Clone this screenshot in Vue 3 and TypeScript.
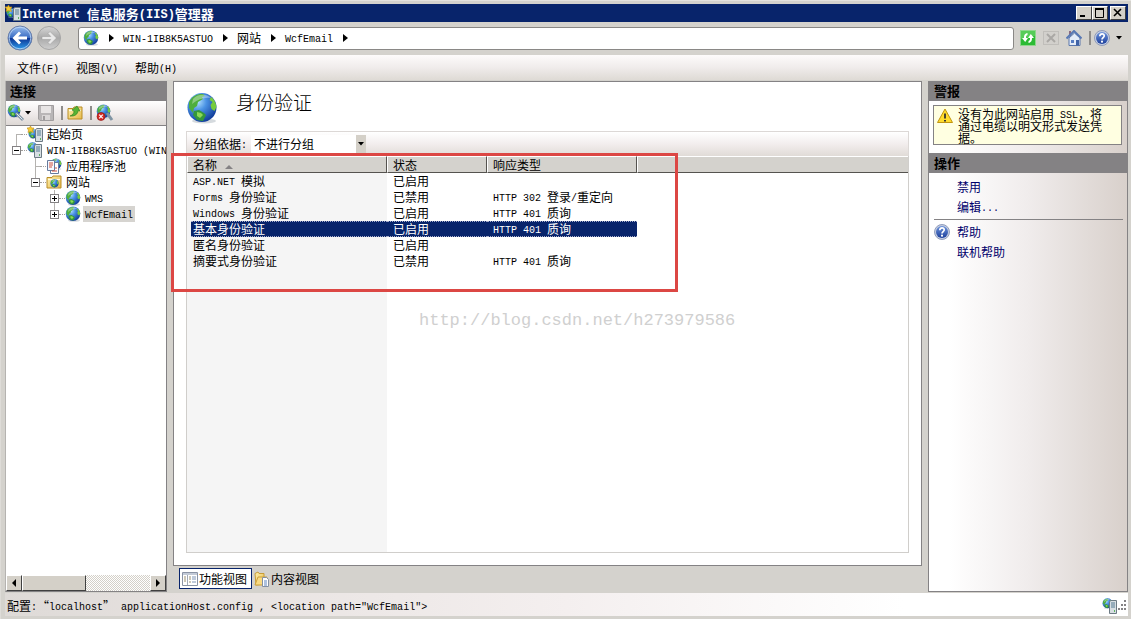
<script setup lang="ts">
import { ref, h, type FunctionalComponent } from 'vue'

interface AuthRow {
  name: string
  status: string
  response: string
}

// Splits a label into half-width and full-width runs so each gets its own face.
const Mx: FunctionalComponent<{ t: string }> = (props) =>
  (props.t.match(/[\x20-\x7e]+|[^\x20-\x7e]+/g) ?? []).map((run) =>
    /^[\x20-\x7e]/.test(run) ? h('span', { class: 'latin' }, run) : run,
  )
Mx.props = ['t']

const crumbs = ['WIN-1IB8K5ASTUO', '网站', 'WcfEmail']
const menus = ['文件(F)', '视图(V)', '帮助(H)']
const rows: AuthRow[] = [
  { name: 'ASP.NET 模拟', status: '已启用', response: '' },
  { name: 'Forms 身份验证', status: '已禁用', response: 'HTTP 302 登录/重定向' },
  { name: 'Windows 身份验证', status: '已启用', response: 'HTTP 401 质询' },
  { name: '基本身份验证', status: '已启用', response: 'HTTP 401 质询' },
  { name: '匿名身份验证', status: '已启用', response: '' },
  { name: '摘要式身份验证', status: '已禁用', response: 'HTTP 401 质询' },
]
const selected = ref(3)
const grouping = ref('不进行分组')
</script>

<template>
  <svg class="defs" aria-hidden="true">
    <defs>
      <radialGradient id="gSea" cx="35%" cy="30%" r="75%">
        <stop offset="0" stop-color="#b4e2ff" />
        <stop offset=".4" stop-color="#4a92e4" />
        <stop offset="1" stop-color="#0f3a98" />
      </radialGradient>
      <linearGradient id="gBack" x1="0" y1="0" x2="0" y2="1">
        <stop offset="0" stop-color="#9cc0ee" />
        <stop offset=".48" stop-color="#3a6cc4" />
        <stop offset=".52" stop-color="#0c3696" />
        <stop offset="1" stop-color="#2fa0ee" />
      </linearGradient>
      <linearGradient id="gFwd" x1="0" y1="0" x2="0" y2="1">
        <stop offset="0" stop-color="#d6d6d6" />
        <stop offset=".5" stop-color="#a9a9a9" />
        <stop offset="1" stop-color="#cfcfcf" />
      </linearGradient>
      <linearGradient id="gFolder" x1="0" y1="0" x2="1" y2="1">
        <stop offset="0" stop-color="#fff2b0" />
        <stop offset="1" stop-color="#e6b94a" />
      </linearGradient>
      <linearGradient id="gHelp" x1="0" y1="0" x2="0" y2="1">
        <stop offset="0" stop-color="#6f95dc" />
        <stop offset="1" stop-color="#1c3f9c" />
      </linearGradient>
    </defs>
    <symbol id="globe" viewBox="0 0 32 32">
      <ellipse cx="18" cy="29" rx="12" ry="2.5" fill="#b9c2c8" opacity=".6" />
      <circle cx="16" cy="15.5" r="14.5" fill="url(#gSea)" />
      <path d="M3 10C6 4 12 1.500 17 2l2 2-3 1 1 2-5 3-1 4-3 2-1 5-4-5z" fill="#4fae3c" />
      <path d="M25 5c3 2 5 6 5.500 10l-2 4-3-2-1-4 2-3-3-2z" fill="#76cc3e" />
      <path d="M8 19l5-1 5 3 2 2-3 6-6-1-4-5z" fill="#35983a" />
      <path d="M11 20l4 1 2 2-3 3-3-2z" fill="#8bd957" />
      <path d="M7 7c4-5 13-6 18-1-6-1-13 1-19 6z" fill="#fff" opacity=".35" />
    </symbol>
    <symbol id="tower" viewBox="0 0 8 14">
      <path d="M.5 1.500L2 .5h5.500v13h-7z" fill="#d7dee2" stroke="#6c7a84" />
      <path d="M2 3h4M2 5h4M2 7h4" stroke="#557a93" />
      <path d="M5 11h1" stroke="#35a535" stroke-width="1.500" />
    </symbol>
    <symbol id="server" viewBox="0 0 16 16">
      <use href="#globe" x="0" y="0" width="11" height="11" />
      <use href="#tower" x="7" y="2" width="8" height="14" />
    </symbol>
    <symbol id="start" viewBox="0 0 16 16">
      <use href="#globe" x="1" y="3" width="10" height="10" />
      <use href="#tower" x="8" y="2" width="8" height="14" />
      <path d="M3.500 0l1 2 2.500 0-1.500 2 1 2.500-3-1-2.500 1 .5-2.500L0 2l2.500-.2z" fill="#f6cb35" stroke="#c18a10" stroke-width=".6" />
    </symbol>
    <symbol id="help" viewBox="0 0 16 16">
      <circle cx="8" cy="8" r="7.500" fill="#c6cfe2" stroke="#7d8cb0" stroke-width=".8" />
      <circle cx="8" cy="8" r="6" fill="url(#gHelp)" />
      <path d="M5.800 6.200C5.800 3 10.400 3.200 10.200 6 10.100 7.600 8 7.700 8 9.500" fill="none" stroke="#fff" stroke-width="1.700" />
      <circle cx="8" cy="11.700" r="1.100" fill="#fff" />
    </symbol>
    <symbol id="folder" viewBox="0 0 16 16">
      <path d="M1 3.500h5l1-1.500h8v12H1z" fill="url(#gFolder)" stroke="#b98c24" />
      <path d="M2 5.500h12" stroke="#fffbe0" />
    </symbol>
  </svg>

  <div class="window">
    <header class="title">
      <svg class="i16"><use href="#start" /></svg>
      <h1><Mx t="Internet 信息服务(IIS)管理器" /></h1>
      <div class="winbtns">
        <button type="button" aria-label="最小化"><svg viewBox="0 0 12 10"><path d="M2 8h5" stroke="#000" stroke-width="2" /></svg></button>
        <button type="button" aria-label="最大化"><svg viewBox="0 0 12 10"><path d="M1.500 1v8.500h8V1M1 1.500h9" fill="none" stroke="#000" /><path d="M1 1h9" stroke="#000" stroke-width="2" /></svg></button>
        <button type="button" class="close" aria-label="关闭"><svg viewBox="0 0 12 10"><path d="M2 1l7 7M9 1l-7 7" stroke="#000" stroke-width="1.600" /></svg></button>
      </div>
    </header>

    <div class="nav">
      <div class="history">
        <button type="button" aria-label="后退">
          <svg class="i26" viewBox="0 0 26 26">
            <circle cx="13" cy="13" r="12" fill="url(#gBack)" stroke="#6b7fa8" />
            <circle cx="13" cy="13" r="10.800" fill="none" stroke="#c4dcf8" stroke-width=".8" />
            <path d="M5.500 13l6.500-6.500 2 2-2.800 3H20v3h-8.800l2.800 3-2 2z" fill="#fff" />
          </svg>
        </button>
        <button type="button" aria-label="前进">
          <svg class="i26" viewBox="0 0 26 26">
            <circle cx="13" cy="13" r="11.500" fill="url(#gFwd)" stroke="#a6a6a6" />
            <path d="M20.500 13L14 6.500l-2 2 2.800 3H6v3h8.800l-2.800 3 2 2z" fill="#e9e9e9" stroke="#999" stroke-width=".5" />
          </svg>
        </button>
      </div>
      <nav class="address" aria-label="路径">
        <svg class="i16"><use href="#globe" /></svg>
        <svg class="arrow" viewBox="0 0 24 12"><path d="M10 2l5 4-5 4z" /></svg>
        <template v-for="c in crumbs" :key="c">
          <button type="button"><Mx :t="c" /></button>
          <svg class="arrow" viewBox="0 0 24 12"><path d="M10 2l5 4-5 4z" /></svg>
        </template>
      </nav>
      <div class="tools">
        <button type="button" aria-label="刷新">
          <svg class="i16" viewBox="0 0 16 16">
            <rect x=".5" y=".5" width="15" height="15" fill="#2dbb35" stroke="#8fd68d" />
            <path d="M1 1h14v5L1 9z" fill="#78db74" opacity=".55" />
            <path d="M7.500 3C4.500 3.500 4 5.500 4 8H2l3.200 4L8 8H6c0-2 0-2.500 1.500-3zM8.500 13c3-.5 3.500-2.500 3.500-5h2l-3.200-4L8 8h2c0 2 0 2.500-1.500 3z" fill="#fff" />
          </svg>
        </button>
        <button type="button" aria-label="停止" disabled>
          <svg class="i16" viewBox="0 0 16 16"><rect x=".5" y="1.500" width="15" height="13" fill="#d2d0cc" stroke="#c0beba" /><path d="M4 4l8 8M12 4l-8 8" stroke="#aaa8a5" stroke-width="2" /></svg>
        </button>
        <button type="button" aria-label="主页">
          <svg class="i16" viewBox="0 0 16 16">
            <path d="M3 1h2v5H3z" fill="#8a6a80" />
            <path d="M3 8v7.500h11V8L8.500 3z" fill="#e4ecf8" stroke="#5b77ab" />
            <path d="M.5 8.500L8 1l7.500 7.500" fill="none" stroke="#5878b4" stroke-width="2" />
            <path d="M10 10h3v5.500h-3z" fill="#3f62a6" /><path d="M5 10h3v3H5z" fill="#577dc2" />
          </svg>
        </button>
        <i class="sep"></i>
        <button type="button" class="helpbtn" aria-label="帮助">
          <svg class="i16"><use href="#help" /></svg>
          <svg class="down" viewBox="0 0 6 4"><path d="M0 0h6L3 3.500z" /></svg>
        </button>
      </div>
    </div>

    <div class="menu" role="menubar">
      <button v-for="m in menus" :key="m" type="button" role="menuitem"><Mx :t="m" /></button>
    </div>

    <div class="body">
      <aside class="panel left">
        <h2>连接</h2>
        <div class="ltools">
          <button type="button" class="conn" aria-label="连接">
            <svg class="i18" viewBox="0 0 18 18"><use href="#globe" width="14" height="14" /><path d="M9 9l7 7" stroke="#8296a6" stroke-width="3" /><path d="M9.500 9.500l6 6" stroke="#e2ecf2" /></svg>
            <svg class="down" viewBox="0 0 6 4"><path d="M0 0h6L3 3.500z" /></svg>
          </button>
          <button type="button" aria-label="保存" disabled>
            <svg class="i16" viewBox="0 0 16 16"><path d="M.5.5h15v15H2l-1.500-1.500z" fill="#b9b6b7" stroke="#a09d9e" /><path d="M3 1h10v7H3z" fill="#e8e5e5" /><path d="M4 10h8v5H4z" fill="#dad7d7" /><path d="M5 11h2v4H5z" fill="#a09d9e" /></svg>
          </button>
          <i class="sep"></i>
          <button type="button" aria-label="向上">
            <svg class="i16" viewBox="0 0 16 16"><use href="#folder" width="16" height="16" /><path d="M3 11c3-1 4-3 4-5L5 5l5-4 3 5-2-.3c0 3-3 6-8 5.300z" fill="#57b334" stroke="#287a17" stroke-width=".6" /></svg>
          </button>
          <i class="sep"></i>
          <button type="button" aria-label="删除连接">
            <svg class="i18" viewBox="0 0 18 18"><use href="#globe" width="15" height="15" /><path d="M11 9l5 7" stroke="#8094a4" stroke-width="3" /><circle cx="5" cy="12.500" r="4" fill="#d52a25" stroke="#8c1010" stroke-width=".6" /><path d="M3.200 10.700l3.600 3.600M6.800 10.700l-3.600 3.600" stroke="#fff" stroke-width="1.200" /></svg>
          </button>
        </div>

        <ul class="tree" role="tree">
          <li role="treeitem" class="l1 nobox first">
            <i class="box"></i><svg class="i16"><use href="#start" /></svg><span>起始页</span>
          </li>
          <li role="treeitem" class="l1 last">
            <button type="button" class="box" aria-label="折叠"></button><svg class="i16"><use href="#server" /></svg><span><Mx t="WIN-1IB8K5ASTUO (WIN" /></span>
          </li>
          <li role="treeitem" class="l2 nobox">
            <i class="box"></i>
            <svg class="i16" viewBox="0 0 16 16"><use href="#globe" x="4" width="12" height="12" /><path d="M4.500 4.500h8v11h-8z" fill="#fff" stroke="#677b9d" /><path d="M1.500 2.500h7v10h-7z" fill="#f4f8ff" stroke="#677b9d" /><path d="M3 5h4M3 7h4M3 9h3M6 13h5M9 10h2" stroke="#d2503c" /></svg>
            <span>应用程序池</span>
          </li>
          <li role="treeitem" class="l2 last">
            <button type="button" class="box" aria-label="折叠"></button>
            <svg class="i16" viewBox="0 0 16 16"><use href="#folder" width="16" height="16" /><use href="#globe" x="4" y="5" width="9" height="9" /></svg>
            <span>网站</span>
          </li>
          <li role="treeitem" class="l3">
            <button type="button" class="box plus" aria-label="展开"></button><svg class="i16"><use href="#globe" /></svg><span><Mx t="WMS" /></span>
          </li>
          <li role="treeitem" class="l3 last current" aria-selected="true">
            <button type="button" class="box plus" aria-label="展开"></button><svg class="i16"><use href="#globe" /></svg><span><Mx t="WcfEmail" /></span>
          </li>
        </ul>

        <div class="hscroll">
          <button type="button" aria-label="向左滚动"><svg viewBox="0 0 8 8"><path d="M6 0v8L2 4z" /></svg></button>
          <div class="track"><div class="thumb"></div></div>
          <button type="button" aria-label="向右滚动"><svg viewBox="0 0 8 8"><path d="M2 0v8l4-4z" /></svg></button>
        </div>
      </aside>

      <main class="center">
        <section class="page">
          <div class="heading">
            <svg class="i32"><use href="#globe" /></svg>
            <h3>身份验证</h3>
          </div>
          <div class="groupbar">
            <label for="grouping"><Mx t="分组依据:" /></label>
            <div class="combo">
              <select id="grouping" v-model="grouping">
                <option>不进行分组</option>
                <option>状态</option>
                <option>响应类型</option>
              </select>
              <span class="drop"><svg class="down" viewBox="0 0 6 4"><path d="M0 0h6L3 3.500z" /></svg></span>
            </div>
          </div>
          <div class="list">
            <table>
              <colgroup><col class="c1" /><col class="c2" /><col class="c3" /><col /></colgroup>
              <thead>
                <tr>
                  <th>名称<svg class="sort" viewBox="0 0 8 4"><path d="M0 4l4-4 4 4z" fill="#848284" /></svg></th>
                  <th>状态</th>
                  <th>响应类型</th>
                  <th></th>
                </tr>
              </thead>
              <tbody>
                <tr v-for="(r, i) in rows" :key="r.name" :class="{ sel: i === selected }" @click="selected = i">
                  <td><div><Mx :t="r.name" /></div></td>
                  <td><div><Mx :t="r.status" /></div></td>
                  <td><div><Mx :t="r.response" /></div></td>
                  <td></td>
                </tr>
              </tbody>
            </table>
          </div>
          <div class="marker"></div>
          <div class="watermark">http://blog.csdn.net/h273979586</div>
        </section>
        <div class="tabs">
          <button type="button" class="on">
            <svg class="i16" viewBox="0 0 16 16"><path d="M.5 1.500h15v13H.5z" fill="#fff" stroke="#8a93a4" /><path d="M1 3h14" stroke="#c3cad6" stroke-width="2" /><path d="M5.500 4v10" stroke="#a3aab6" /><path d="M2 6h2M2 8h2M2 10h2M7 11h2M7 8h2M7 6h2" stroke="#9a8f6f" /><path d="M10 6h4M10 8h4M10 11h4" stroke="#7e94b4" /></svg>
            功能视图
          </button>
          <button type="button">
            <svg class="i16" viewBox="0 0 16 16"><path d="M1 2.500L4 1l1 1.500h5V13L2 14z" fill="url(#gFolder)" stroke="#c89c36" /><path d="M1 14l3-8h9l-2 8z" fill="#f8da83" stroke="#cda03b" /><path d="M8.500 6.500h4l2 2v7h-6z" fill="#fff" stroke="#8390a4" /><path d="M10 10h3M10 12h3M10 14h3" stroke="#5d83bd" /></svg>
            内容视图
          </button>
        </div>
      </main>

      <aside class="panel right">
        <h2>警报</h2>
        <div class="alert">
          <svg class="i16" viewBox="0 0 16 16"><path d="M8 1l7.500 13.500H.5z" fill="#ffdc2e" stroke="#c09410" stroke-linejoin="round" /><path d="M8 5.500v5" stroke="#333" stroke-width="1.800" /><path d="M7 12h2v1.500H7z" fill="#333" /></svg>
          <p><Mx t="没有为此网站启用 SSL，将通过电缆以明文形式发送凭据。" /></p>
        </div>
        <h2>操作</h2>
        <div class="actions">
          <a href="#disable">禁用</a>
          <a href="#edit"><span><Mx t="编辑..." /></span></a>
          <hr />
          <a href="#help"><svg class="i16"><use href="#help" /></svg>帮助</a>
          <a href="#online">联机帮助</a>
        </div>
      </aside>
    </div>

    <footer class="status">
      <span class="config"><Mx t='配置:“localhost” applicationHost.config , <location path="WcfEmail">' /></span>
      <svg class="i16"><use href="#server" /></svg>
      <svg class="grip" viewBox="0 0 8 11"><path d="M6 0h2v2H6zM6 4h2v2H6zM6 8h2v2H6zM3 4h2v2H3zM3 8h2v2H3zM0 8h2v2H0z" fill="#848284" /></svg>
    </footer>
  </div>
</template>

<style>
body {
  margin: 0;
  background: #d4d0c8;
}
.latin {
  font-family: "Liberation Mono", monospace;
  font-size: 10px;
  line-height: 0;
  vertical-align: 1px;
}
.title .latin {
  font-size: 12px;
}
</style>

<style scoped>
.defs {
  position: absolute;
  width: 0;
  height: 0;
}
.window,
.window * {
  box-sizing: border-box;
}
.window {
  height: 100vh;
  display: flex;
  flex-direction: column;
  padding: 3px 3px 3px 4px;
  background: #d4d2cd;
  border-top: 1px solid #e4e2de;
  border-left: 1px solid #dedcd8;
  font: 12px/16px "Noto Sans CJK SC", sans-serif;
  color: #000;
  overflow: hidden;
}
.window button {
  font: inherit;
  color: inherit;
  background: none;
  border: 0;
  padding: 0;
  margin: 0;
  white-space: nowrap;
}
svg {
  flex: none;
  display: block;
}
.i16 {
  width: 16px;
  height: 16px;
}
.i18 {
  width: 18px;
  height: 18px;
}
.i26 {
  width: 26px;
  height: 26px;
}
.i32 {
  width: 32px;
  height: 32px;
}
.down {
  width: 6px;
  height: 4px;
}
.sep {
  width: 2px;
  height: 14px;
  background: #8f8d8a;
}

/* title bar */
.title {
  flex: none;
  display: flex;
  align-items: center;
  height: 18px;
  background: #08246b;
  color: #fff;
}
.title h1 {
  flex: 1;
  margin: 0 0 0 1px;
  font-size: 13px;
  line-height: 17px;
}
.winbtns {
  display: flex;
  padding-right: 2px;
}
.window .winbtns button {
  width: 16px;
  height: 14px;
  padding: 0 1px;
  background: #d4d0c8;
  border: 1px solid;
  border-color: #fff #404040 #404040 #fff;
}
.window .winbtns .close {
  margin-left: 2px;
}
.winbtns svg {
  width: 12px;
  height: 10px;
}

/* navigation */
.nav {
  flex: none;
  display: flex;
  align-items: center;
  height: 32px;
  padding-left: 2px;
}
.history {
  display: flex;
  gap: 3px;
  width: 71px;
}
.address {
  flex: 1;
  display: flex;
  align-items: center;
  height: 23px;
  padding-left: 4px;
  background: #fff;
  border: 1px solid #8a8886;
  border-radius: 3px;
}
.arrow {
  width: 24px;
  height: 12px;
}
.tools {
  display: flex;
  align-items: center;
  gap: 7px;
  padding: 0 6px;
}
.helpbtn {
  display: flex;
  align-items: center;
  gap: 6px;
}
.tools .sep {
  margin-right: -4px;
}

/* menu */
.menu {
  flex: none;
  display: flex;
  gap: 17px;
  height: 25px;
  margin-top: 1px;
  padding: 0 12px;
  background: linear-gradient(#fdfbfb, #f0eceb 50%, #dedad5);
}

/* three columns */
.body {
  flex: 1;
  min-height: 0;
  display: grid;
  grid-template-columns: 162px minmax(0, 1fr) 200px;
  column-gap: 6px;
  padding-top: 1px;
}
.panel {
  display: flex;
  flex-direction: column;
  min-width: 0;
  min-height: 0;
  border: 1px solid #848284;
  border-top: 0;
  background: #fff;
}
.panel h2 {
  flex: none;
  margin: 0;
  height: 20px;
  padding-left: 5px;
  background: #848284;
  font-size: 13px;
  line-height: 20px;
}
.left {
  border-left-color: #b5b3b0;
}
.left h2 {
  padding-left: 4px;
}
.ltools {
  flex: none;
  display: flex;
  align-items: center;
  gap: 7px;
  height: 25px;
  padding-left: 1px;
  background: linear-gradient(#fff, #f1ecec 50%, #ddd8d5);
  border-bottom: 1px solid #848284;
}
.ltools .sep {
  margin-right: -3px;
}
.conn {
  display: flex;
  align-items: center;
}

/* connection tree */
.tree {
  flex: 1;
  min-height: 0;
  margin: 0;
  padding: 0;
  list-style: none;
  overflow: hidden;
}
.tree li {
  display: flex;
  align-items: center;
  height: 16px;
  white-space: nowrap;
  background-image: linear-gradient(#b5b3b0, #b5b3b0);
  background-repeat: no-repeat;
  background-size: 1px 16px;
}
.tree .last {
  background-size: 1px 8px;
}
.tree .l1 {
  padding-left: 6px;
  background-position: 10px 0;
}
.tree .first {
  background-position: 10px 8px;
}
.tree .l2 {
  padding-left: 25px;
  background-position: 29px 0;
}
.tree .l3 {
  padding-left: 44px;
  background-position: 48px 0;
}
.tree .i16 {
  order: 1;
  margin-left: 6px;
}
.tree li::after {
  content: "";
  flex: none;
  width: 6px;
  margin-right: -6px;
  border-top: 1px dotted #a09e9c;
}
.tree span {
  order: 2;
  margin-left: 2px;
  padding: 0 2px;
}
.current span {
  background: #d6d4d0;
}
.tree .current :deep(.latin) {
  padding: 0;
  margin: 0;
}
.tree .box {
  flex: none;
  width: 9px;
  height: 9px;
  border: 1px solid #848284;
  background: linear-gradient(#000, #000) center / 5px 1px no-repeat #fff;
}
.tree .plus {
  background: linear-gradient(#000, #000) center / 5px 1px no-repeat,
    linear-gradient(#000, #000) center / 1px 5px no-repeat #fff;
}
.tree .nobox .box {
  height: 16px;
  border: 0;
  background: linear-gradient(#b5b3b0, #b5b3b0) 4px 8px / 5px 1px no-repeat;
}
.hscroll {
  flex: none;
  display: flex;
  height: 16px;
}
.window .hscroll button {
  width: 16px;
  padding: 0 3px;
}
.window .hscroll button,
.thumb {
  height: 16px;
  background: #d4d0c8;
  border: 1px solid;
  border-color: #fff #404040 #404040 #fff;
}
.hscroll svg {
  width: 8px;
  height: 8px;
}
.track {
  flex: 1;
  background: repeating-conic-gradient(#d4d0c8 0 25%, #fff 0 50%) 0 0 / 2px 2px;
}
.thumb {
  width: 50%;
}

/* feature page */
.center {
  display: flex;
  flex-direction: column;
  min-width: 0;
  min-height: 0;
}
.page {
  position: relative;
  flex: 1;
  min-height: 0;
  display: flex;
  flex-direction: column;
  padding: 10px 12px 12px;
  background: #fff;
  border: 1px solid #848284;
}
.heading {
  flex: none;
  display: flex;
  gap: 18px;
  height: 39px;
}
.heading h3 {
  margin: 0;
  font-size: 19px;
  font-weight: 300;
  line-height: 20px;
}
.groupbar {
  flex: none;
  display: flex;
  align-items: center;
  gap: 4px;
  height: 25px;
  padding-left: 6px;
  border: 1px solid #dcd8d6;
  border-bottom: 0;
  background: linear-gradient(#fff, #f2eded 50%, #e0dbd7);
}
.combo {
  display: flex;
  width: 115px;
  height: 18px;
  background: #fff;
}
.combo select {
  flex: 1;
  min-width: 0;
  appearance: none;
  border: 0;
  padding: 0 3px;
  background: none;
  font: inherit;
  color: inherit;
}
.drop {
  width: 10px;
  display: grid;
  place-items: center;
  background: #d4d0c8;
  pointer-events: none;
}
.list {
  flex: 1;
  min-height: 0;
  border: 1px solid #d0cecb;
  border-top: 0;
  background: linear-gradient(#f5f5f5, #f5f5f5) 0 0 / 200px 100% no-repeat #fff;
}
table {
  width: 100%;
  table-layout: fixed;
  border-collapse: separate;
  border-spacing: 0;
}
.c1 {
  width: 200px;
}
.c2 {
  width: 100px;
}
.c3 {
  width: 150px;
}
th {
  height: 17px;
  padding: 0 0 0 5px;
  background: #d4d2cd;
  border: 1px solid;
  border-color: #fff #55534f #55534f #fff;
  font-weight: normal;
  line-height: 15px;
  text-align: left;
}
th:last-child {
  border-right: 0;
}
.sort {
  display: inline-block;
  width: 8px;
  height: 4px;
  margin-left: 8px;
  vertical-align: middle;
}
td {
  height: 16px;
  padding: 0;
}
td div {
  height: 16px;
  padding-left: 6px;
  white-space: nowrap;
}
td:first-child div {
  margin-left: 4px;
  padding-left: 2px;
}
.sel div {
  background: #08246b;
  color: #fff;
  border: 1px dotted #a8aecb;
  border-width: 1px 0;
  line-height: 14px;
}
.marker {
  position: absolute;
  left: -3px;
  top: 71px;
  width: 507px;
  height: 139px;
  border: 3px solid #dc4744;
  pointer-events: none;
}
.watermark {
  position: absolute;
  left: 245px;
  top: 227px;
  font: 17px/24px "Liberation Mono", monospace;
  color: #d0d0d0;
  pointer-events: none;
}
.tabs {
  flex: none;
  display: flex;
  gap: 2px;
  height: 26px;
  padding: 2px 6px;
}
.window .tabs button {
  display: flex;
  align-items: center;
  gap: 1px;
  height: 21px;
}
.window .tabs .on {
  padding: 0 4px 0 2px;
  background: #fff;
  border: 1px solid #08246b;
}

/* alerts and actions */
.right {
  background: linear-gradient(90deg, #fff 10%, #f0ecec 50%, #d8d0cb);
}
.alert {
  flex: none;
  display: flex;
  gap: 5px;
  margin: 4px 5px 8px 4px;
  padding: 2px 14px 0 3px;
  background: #ffffe1;
  border: 1px solid #848284;
}
.alert p {
  margin: 0;
  line-height: 12px;
}
.actions {
  display: flex;
  flex-direction: column;
  padding: 4px 4px 0 5px;
}
.actions a {
  display: flex;
  align-items: center;
  gap: 7px;
  height: 20px;
  padding-left: 23px;
  color: #00006b;
  text-decoration: none;
}
.actions a:has(svg) {
  padding-left: 0;
}
.actions hr {
  width: 100%;
  margin: 2px 0;
  border: 0;
  border-top: 1px solid #848284;
}

/* status bar */
.status {
  flex: none;
  display: flex;
  align-items: center;
  height: 23px;
  margin-top: 1px;
  padding: 2px 2px 0;
  background: linear-gradient(90deg, #dedad7, #e8e3e1 20%, #f4efef 50%, #fff 80%);
}
.config {
  flex: 1;
}
.grip {
  width: 8px;
  height: 11px;
}
</style>
